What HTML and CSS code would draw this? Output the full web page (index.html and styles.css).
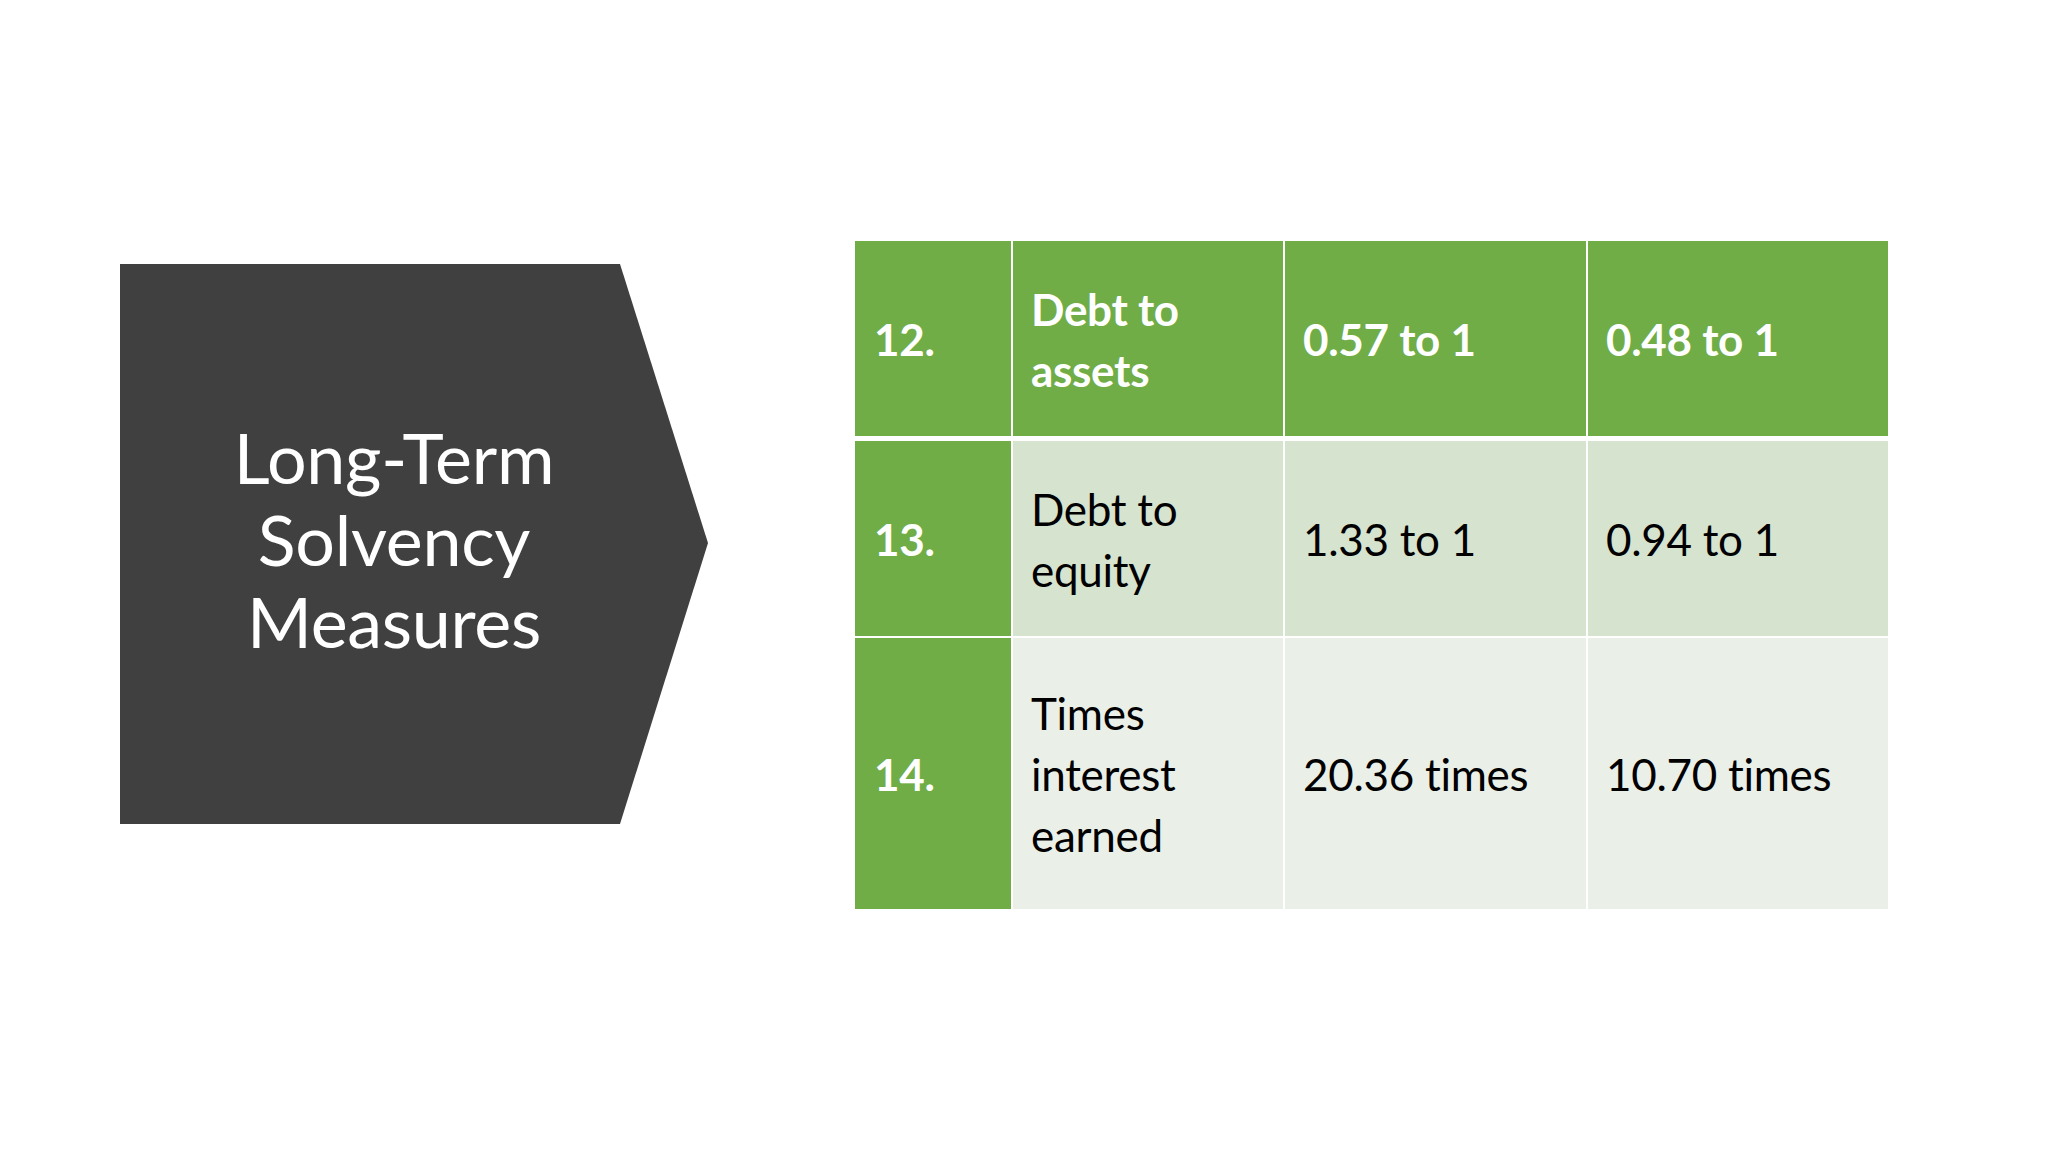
FILE: index.html
```html
<!DOCTYPE html>
<html lang="en">
<head>
<meta charset="utf-8">
<title>Long-Term Solvency Measures</title>
<link rel="stylesheet" href="styles.css">
</head>
<body>
<main class="slide">
  <div class="chevron">
    <h1 class="chevron-title">Long-Term<br>Solvency<br>Measures</h1>
  </div>
  <div class="ratio-table">
    <div class="row row-head">
      <div class="cell num">12.</div>
      <div class="cell name">Debt to<br>assets</div>
      <div class="cell val">0.57 to 1</div>
      <div class="cell val">0.48 to 1</div>
    </div>
    <div class="row row-band1">
      <div class="cell num">13.</div>
      <div class="cell name">Debt to<br>equity</div>
      <div class="cell val">1.33 to 1</div>
      <div class="cell val">0.94 to 1</div>
    </div>
    <div class="row row-band2">
      <div class="cell num">14.</div>
      <div class="cell name">Times<br>interest<br>earned</div>
      <div class="cell val">20.36 times</div>
      <div class="cell val">10.70 times</div>
    </div>
  </div>
</main>
</body>
</html>
```
FILE: styles.css
```css
html, body {
  margin: 0;
  padding: 0;
  background: #ffffff;
}

body {
  width: 2048px;
  height: 1152px;
  overflow: hidden;
  font-family: Lato, "Open Sans", "Liberation Sans", sans-serif;
}

.slide {
  display: flex;
  align-items: flex-start;
  padding: 241px 0 0 120px;
  gap: 147px;
}

.chevron {
  margin-top: 23px;
  width: 588px;
  height: 560px;
  background: #404040;
  clip-path: polygon(0 0, 500px 0, 588px 279px, 500px 560px, 0 560px);
  display: flex;
  align-items: center;
  justify-content: center;
  padding: 0 60px 10px 20px;
  box-sizing: border-box;
}

.chevron-title {
  margin: 0;
  color: #ffffff;
  font-weight: 400;
  font-size: 70px;
  line-height: 82px;
  text-align: center;
  letter-spacing: -0.3px;
}

.ratio-table {
  display: flex;
  flex-direction: column;
  width: 1033px;
}

.row {
  display: flex;
  gap: 2px;
}

.row-head {
  height: 195px;
  margin-bottom: 5px;
}

.row-band1 {
  height: 195px;
  margin-bottom: 2px;
}

.row-band2 {
  height: 271px;
}

.cell {
  display: flex;
  align-items: center;
  box-sizing: border-box;
  padding: 2px 10px 0 18px;
  font-size: 44px;
  line-height: 61px;
  letter-spacing: -0.3px;
  color: #000000;
}

.cell.num {
  width: 156px;
  padding-left: 19px;
  background: #70ad47;
  color: #ffffff;
  font-weight: 700;
}

.cell.name {
  width: 270px;
}

.cell.val {
  width: 301px;
}

.cell.val:last-child {
  width: 300px;
}

.row-head .cell {
  background: #70ad47;
  color: #ffffff;
  font-weight: 700;
}

.row-band1 .cell.name,
.row-band1 .cell.val {
  background: #d5e3cf;
}

.row-band2 .cell.name,
.row-band2 .cell.val {
  background: #eaefe8;
}
```
